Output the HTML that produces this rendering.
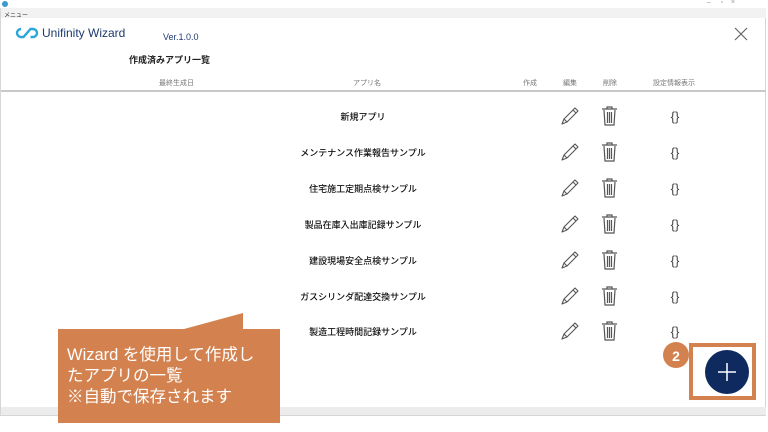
<!DOCTYPE html>
<html><head><meta charset="utf-8"><style>
*{margin:0;padding:0;box-sizing:border-box}
body{width:768px;height:432px;background:#fff;position:relative;overflow:hidden;font-family:"Liberation Sans","Noto Sans CJK JP",sans-serif;color:#222}
.a{position:absolute}
.row{position:absolute;left:0;width:768px;height:20px}
.name{position:absolute;left:263px;width:200px;text-align:center;font-size:9px;top:4px;color:#111;font-weight:500}
.hd{font-size:7px;color:#777;top:78px}
</style></head><body>
<div class="a" style="left:0;top:0;width:766px;height:416px;border:1px solid #d6d6d6;border-top:none"></div>
<div class="a" style="left:0;top:0;width:768px;height:8px;background:#fff"></div>
<div class="a" style="left:2px;top:1px;width:6px;height:6px;border-radius:50%;background:#3a9bd0"></div>
<div class="a" style="left:707px;top:-1px;font-size:7px;color:#999">–&nbsp;&nbsp;&nbsp;&nbsp;&nbsp;▫&nbsp;&nbsp;&nbsp;&nbsp;×</div>
<div class="a" style="left:1px;top:8px;width:765px;height:10px;background:#f2f2f2"></div>
<div class="a" style="left:4px;top:10px;font-size:6px;color:#333">メニュー</div>
<svg class="a" style="left:14px;top:26px" width="26" height="14" viewBox="0 0 26 14"><path d="M7 3a4 4 0 1 0 0 8h2.5l7-8h2.5a4 4 0 1 1 0 8h-2.5" fill="none" stroke="#2aa7d8" stroke-width="2.4"/></svg>
<div class="a" style="left:42px;top:26px;font-size:12px;color:#1f3a6e">Unifinity Wizard</div>
<div class="a" style="left:163px;top:32px;font-size:9px;color:#1f3a6e">Ver.1.0.0</div>
<div class="a" style="left:129px;top:53px;font-size:9px;font-weight:bold;color:#222">作成済みアプリ一覧</div>
<svg class="a" style="left:734px;top:27px" width="14" height="14"><path d="M1 1L13 13M13 1L1 13" stroke="#666" stroke-width="1.2"/></svg>
<div class="a hd" style="left:159px">最終生成日</div>
<div class="a hd" style="left:353px">アプリ名</div>
<div class="a hd" style="left:523px">作成</div>
<div class="a hd" style="left:563px">編集</div>
<div class="a hd" style="left:603px">削除</div>
<div class="a hd" style="left:653px">設定情報表示</div>
<div class="a" style="left:1px;top:90px;width:765px;height:2px;background:#c8c8c8"></div>

<svg width="0" height="0" style="position:absolute"><defs>
<g id="pen"><path d="M2 19L4 14L15 3L18 6L7 17Z M4 14L7 17 M13 5L16 8" fill="none" stroke="#555" stroke-width="1.1" stroke-linejoin="round"/></g>
<g id="tr"><path d="M1 4H16M6 4V2H11V4M3 5L4 20H13L14 5M6.5 7V18M8.5 7V18M10.5 7V18" fill="none" stroke="#555" stroke-width="1.2"/></g>
</defs></svg>

<div class="row" style="top:106px"><div class="name">新規アプリ</div></div>
<div class="row" style="top:142px"><div class="name">メンテナンス作業報告サンプル</div></div>
<div class="row" style="top:178px"><div class="name">住宅施工定期点検サンプル</div></div>
<div class="row" style="top:214px"><div class="name">製品在庫入出庫記録サンプル</div></div>
<div class="row" style="top:250px"><div class="name">建設現場安全点検サンプル</div></div>
<div class="row" style="top:286px"><div class="name">ガスシリンダ配達交換サンプル</div></div>
<div class="row" style="top:321px"><div class="name">製造工程時間記録サンプル</div></div>

<svg class="a" style="left:0;top:0" width="768" height="432">
<g transform="translate(560,105)"><use href="#pen"/></g><g transform="translate(601,105)"><use href="#tr"/></g>
<g transform="translate(560,141)"><use href="#pen"/></g><g transform="translate(601,141)"><use href="#tr"/></g>
<g transform="translate(560,177)"><use href="#pen"/></g><g transform="translate(601,177)"><use href="#tr"/></g>
<g transform="translate(560,213)"><use href="#pen"/></g><g transform="translate(601,213)"><use href="#tr"/></g>
<g transform="translate(560,249)"><use href="#pen"/></g><g transform="translate(601,249)"><use href="#tr"/></g>
<g transform="translate(560,285)"><use href="#pen"/></g><g transform="translate(601,285)"><use href="#tr"/></g>
<g transform="translate(560,320)"><use href="#pen"/></g><g transform="translate(601,320)"><use href="#tr"/></g>
<g font-size="13" fill="#444" font-family="Liberation Sans" text-anchor="middle">
<text x="675" y="121">{}</text><text x="675" y="157">{}</text><text x="675" y="193">{}</text><text x="675" y="229">{}</text><text x="675" y="265">{}</text><text x="675" y="301">{}</text><text x="675" y="336">{}</text>
</g>
</svg>

<div class="a" style="left:1px;top:407px;width:765px;height:8px;background:#ececec"></div>

<svg class="a" style="left:0;top:0" width="768" height="432">
<path d="M58 329H184L243 313V329H280V423H58Z" fill="#d3824f"/>
<rect x="691" y="345" width="63" height="53" fill="none" stroke="#d3824f" stroke-width="4"/>
<circle cx="727" cy="372" r="22" fill="#0f2a5e"/>
<path d="M727 363V381M718 372H736" stroke="#fff" stroke-width="1.5"/>
<circle cx="676" cy="355" r="13" fill="#d3824f"/>
<text x="676" y="361" font-size="14" font-weight="bold" fill="#fff" text-anchor="middle" font-family="Liberation Sans">2</text>
</svg>
<div class="a" style="left:67px;top:345px;font-size:16.5px;line-height:21px;color:#fff;white-space:nowrap">Wizard を使用して作成し<br>たアプリの一覧<br>※自動で保存されます</div>
</body></html>
